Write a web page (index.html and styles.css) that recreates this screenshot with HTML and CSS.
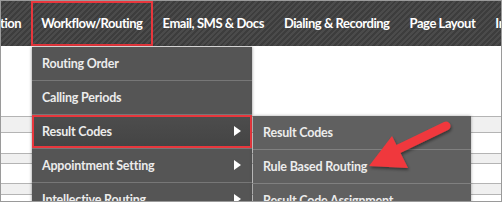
FILE: index.html
```html
<!DOCTYPE html>
<html>
<head>
<meta charset="utf-8">
<link rel="stylesheet" href="styles.css">
</head>
<body>
<div class="frame">
  <nav class="topbar">
    <div class="nav-item first">tion</div>
    <div class="nav-item active">Workflow/Routing</div>
    <div class="nav-item">Email, SMS &amp; Docs</div>
    <div class="nav-item">Dialing &amp; Recording</div>
    <div class="nav-item">Page Layout</div>
    <div class="nav-item">Integration</div>
  </nav>
  <div class="content">
    <div class="spacer"></div>
    <div class="trow band r1"></div>
    <div class="trow r2"></div>
    <div class="trow band r3"></div>
    <div class="trow r4"></div>
    <div class="trow band r5"></div>
    <div class="trow r6"></div>
  </div>

  <ul class="menu">
    <li class="menu-row">Routing Order</li>
    <li class="menu-row">Calling Periods</li>
    <li class="menu-row selected">Result Codes<span class="caret"></span></li>
    <li class="menu-row">Appointment Setting<span class="caret"></span></li>
    <li class="menu-row">Intellective Routing<span class="caret"></span></li>
  </ul>

  <ul class="submenu">
    <li class="menu-row">Result Codes</li>
    <li class="menu-row">Rule Based Routing</li>
    <li class="menu-row">Result Code Assignment</li>
  </ul>

  <svg class="callout" width="502" height="202" viewBox="0 0 502 202">
    <defs>
      <filter id="sh" x="-20%" y="-20%" width="140%" height="140%">
        <feDropShadow dx="1" dy="2" stdDeviation="1.5" flood-color="#000" flood-opacity="0.45"/>
      </filter>
    </defs>
    <g filter="url(#sh)">
      <line x1="446" y1="126" x2="390" y2="153" stroke="#f0393c" stroke-width="9" stroke-linecap="round"/>
      <polygon points="369,166 392,136 408,168" fill="#f0393c"/>
    </g>
  </svg>
</div>
</body>
</html>
```

FILE: styles.css
```css
* { box-sizing: border-box; }
html, body { margin: 0; padding: 0; background: #fff; }
.frame {
  position: relative;
  width: 502px;
  height: 202px;
  border: 1px solid #9a9a9a;
  overflow: hidden;
  font-family: Lato, "Open Sans", sans-serif;
  display: flex;
  flex-direction: column;
}
.topbar {
  flex: 0 0 45px;
  display: flex;
  align-items: stretch;
  background: repeating-linear-gradient(135deg, #4b4b4b 0 2px, #3d3d3d 2px 4px);
  white-space: nowrap;
}
.nav-item {
  display: flex;
  align-items: center;
  padding: 0 10px 2px;
  color: #fff;
  font-weight: 700;
  font-size: 13px;
  letter-spacing: -0.45px;
}
.nav-item.first { padding-left: 0; margin-left: -1px; }
.nav-item.active { box-shadow: inset 0 0 0 2px #e8373d; }
.content {
  flex: 1;
  display: flex;
  flex-direction: column;
  background: #fff;
}
.spacer { height: 70px; }
.trow { border-top: 1px solid #b4b4b4; }
.band { background: #f0f0f0; }
.r1 { height: 16px; }
.r2 { height: 21px; }
.r3 { height: 10px; }
.r4 { height: 20px; }
.r5 { height: 11px; }
.r6 { height: 10px; }

.menu, .submenu {
  list-style: none;
  margin: 0;
  padding: 0;
  position: absolute;
}
.menu {
  left: 31px;
  top: 46px;
  width: 220px;
  background: #555;
  box-shadow: 0 0 3px rgba(0,0,0,0.45);
}
.submenu {
  left: 252px;
  top: 115px;
  width: 218px;
  background: #606060;
  box-shadow: 0 0 3px rgba(0,0,0,0.35);
}
.menu-row {
  height: 34px;
  display: flex;
  align-items: center;
  justify-content: space-between;
  padding: 0 11px 1px 10px;
  border-bottom: 1px solid #777;
  color: #ececec;
  font-weight: 700;
  font-size: 12.5px;
  letter-spacing: -0.2px;
  white-space: nowrap;
}
.submenu .menu-row { border-bottom-color: #808080; }
.menu-row.selected {
  background: linear-gradient(#4d4d4d, #444);
  box-shadow: inset 0 0 0 2px #e8373d;
}
.caret {
  width: 0;
  height: 0;
  border-left: 7px solid #fff;
  border-top: 5px solid transparent;
  border-bottom: 5px solid transparent;
}
.callout {
  position: absolute;
  left: -1px;
  top: -1px;
  pointer-events: none;
}
```
